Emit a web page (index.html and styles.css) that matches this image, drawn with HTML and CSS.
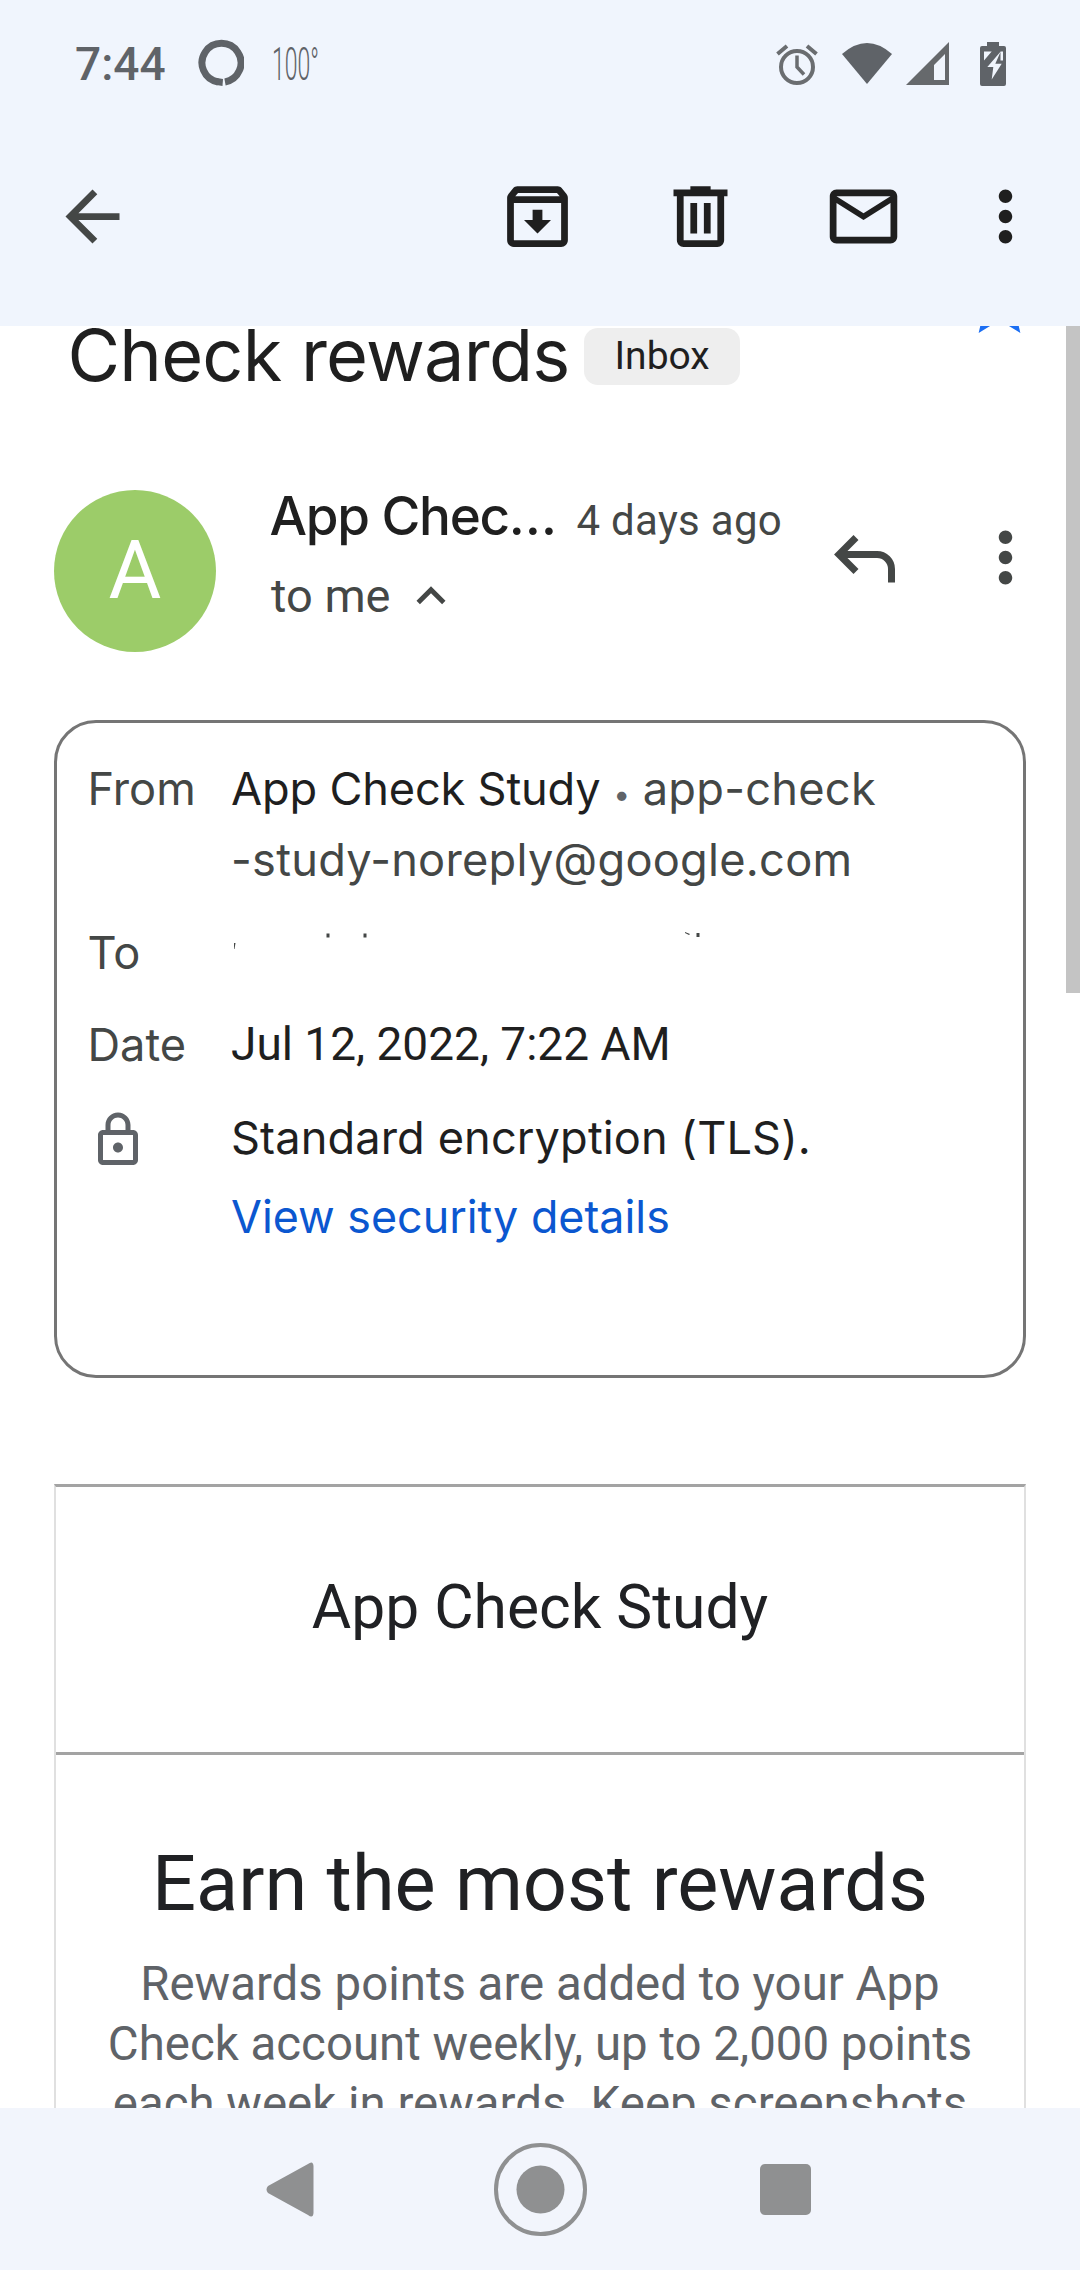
FILE: index.html
```html
<!DOCTYPE html>
<html lang="en">
<head>
<meta charset="utf-8">
<title>Check rewards</title>
<link rel="stylesheet" href="styles.css">
</head>
<body>
<div class="app">
  <header class="top">
    <div class="status">
      <span class="time">7:44</span>
      <svg class="ring" width="46" height="47" viewBox="0 0 46 47"><path d="M20 43A19.500 19.500 0 1 1 27 43" fill="none" stroke="#5f6368" stroke-width="7"/><path d="M19 39l6 1-.5 7-6-1z" fill="#5f6368"/></svg>
      <span class="temp">100°</span>
      <div class="status-right">
        <svg width="42" height="42" viewBox="0 0 42 42" class="s-alarm"><circle cx="21" cy="24" r="16" fill="none" stroke="#6a6d70" stroke-width="4"/><path d="M21 12.500V24l7 7.500" fill="none" stroke="#6a6d70" stroke-width="3.500"/><path d="M1.500 11L11 3M31 3l9.500 8" fill="none" stroke="#6a6d70" stroke-width="4"/></svg>
        <svg width="50" height="41" viewBox="0 0 50 41" class="s-wifi"><path d="M0 11Q25-11 50 11L25 41Z" fill="#5f6368"/></svg>
        <svg width="43" height="43" viewBox="0 0 43 43" class="s-signal"><path fill-rule="evenodd" d="M0 43L43 0V43ZM28 38H39V12L28 23Z" fill="#66696c"/></svg>
        <svg width="26" height="44" viewBox="0 0 26 44" class="s-batt"><path fill-rule="evenodd" d="M7 0H19V4H24Q26 4 26 6V42Q26 44 24 44H2Q0 44 0 42V6Q0 4 2 4H7ZM4 9.500V18.500L11.700 9.500ZM23 9.500H20.500V18.500H23ZM20.700 9.500L7.300 25H13.300L11.700 37.500L21.700 21.700H15.300Z" fill="#5f6368"/></svg>
      </div>
    </div>
    <div class="toolbar">
      <svg class="ic ic-back" viewBox="0 0 24 24"><path d="M20 11H7.830l5.590-5.590L12 4l-8 8 8 8 1.410-1.410L7.830 13H20v-2z"/></svg>
      <svg class="ic ic-archive" viewBox="0 0 24 24"><path d="M20.540 5.230l-1.390-1.680C18.880 3.210 18.470 3 18 3H6c-.47 0-.88.21-1.160.55L3.460 5.230C3.170 5.570 3 6.020 3 6.500V19c0 1.100.9 2 2 2h14c1.100 0 2-.9 2-2V6.500c0-.48-.17-.93-.46-1.270zM6.240 5h11.520l.83 1H5.420l.82-1zM5 19V8h14v11H5zm8.450-9h-2.900v3H8l4 4 4-4h-2.550z"/></svg>
      <svg class="ic" viewBox="0 0 24 24"><path d="M15 4V3H9v1H4v2h1v13c0 1.100.9 2 2 2h10c1.100 0 2-.9 2-2V6h1V4h-5zm2 15H7V6h10v13zM9 8h2v9H9zm4 0h2v9h-2z"/></svg>
      <svg class="ic" viewBox="0 0 24 24"><path d="M20 4H4c-1.100 0-1.990.9-1.990 2L2 18c0 1.100.9 2 2 2h16c1.100 0 2-.9 2-2V6c0-1.100-.9-2-2-2zm0 14H4V8l8 5 8-5v10zm-8-7L4 6h16l-8 5z"/></svg>
      <svg class="ic ic-more" viewBox="0 0 24 24"><path d="M12 8c1.100 0 2-.9 2-2s-.9-2-2-2-2 .9-2 2 .9 2 2 2zm0 2c-1.100 0-2 .9-2 2s.9 2 2 2 2-.9 2-2-.9-2-2-2zm0 6c-1.100 0-2 .9-2 2s.9 2 2 2 2-.9 2-2-.9-2-2-2z"/></svg>
    </div>
  </header>

  <main class="content">
    <div class="scrollbar"></div>
    <div class="subject">
      <h1 class="subject-title">Check rewards</h1>
      <span class="chip">Inbox</span>
      <svg class="star" viewBox="0 0 24 24"><path d="M12 17.270L18.180 21l-1.640-7.030L22 9.240l-7.190-.61L12 2 9.190 8.630 2 9.240l5.460 4.730L5.820 21z"/></svg>
    </div>

    <div class="sender">
      <div class="avatar">A</div>
      <div class="meta">
        <div class="meta-top">
          <span class="name">App Chec…</span>
          <span class="when">4 days ago</span>
        </div>
        <div class="meta-sub">
          <span>to me</span>
          <svg class="chev" viewBox="0 0 24 24"><path d="M12 8l-6 6 1.410 1.410L12 10.830l4.590 4.580L18 14z"/></svg>
        </div>
      </div>
      <svg class="reply" viewBox="0 0 81 81"><path d="M32 20.500L15 37.500l17 17M15 37.500H53a14.500 14.500 0 0 1 14.500 14.500V65.500" fill="none" stroke="#444746" stroke-width="7"/></svg>
      <svg class="ic ic-more2" viewBox="0 0 24 24"><path d="M12 8c1.100 0 2-.9 2-2s-.9-2-2-2-2 .9-2 2 .9 2 2 2zm0 2c-1.100 0-2 .9-2 2s.9 2 2 2 2-.9 2-2-.9-2-2-2zm0 6c-1.100 0-2 .9-2 2s.9 2 2 2 2-.9 2-2-.9-2-2-2z"/></svg>
    </div>

    <section class="details">
      <div class="label">From</div>
      <div class="value value-from"><span class="from-name">App Check Study</span> <span class="dot">•</span> <span class="addr">app-check<br>-study-noreply@google.com</span></div>
      <div class="label">To</div>
      <div class="value"><svg class="specks" width="480" height="71" viewBox="0 0 480 71"><path d="M95.500 16.500h3v4h-3zM132.500 16.500h3v4h-3zM465.500 16h3v4h-3zM454 15l5 2-1 1-4-2zM3 26h1.500l-1 6H3z" fill="#444746"/></svg></div>
      <div class="label">Date</div>
      <div class="value value-date">Jul 12, 2022, 7:22 AM</div>
      <svg class="lock" viewBox="0 0 24 24"><path d="M18 8h-1V6c0-2.760-2.240-5-5-5S7 3.240 7 6v2H6c-1.100 0-2 .9-2 2v10c0 1.100.9 2 2 2h12c1.100 0 2-.9 2-2V10c0-1.100-.9-2-2-2zM9 6c0-1.660 1.340-3 3-3s3 1.340 3 3v2H9V6zm9 14H6V10h12v10zm-6-3c1.100 0 2-.9 2-2s-.9-2-2-2-2 .9-2 2 .9 2 2 2z"/></svg>
      <div class="value value-tls">
        <div class="tls">Standard encryption (TLS).</div>
        <a class="link">View security details</a>
      </div>
    </section>

    <section class="mail">
      <div class="mail-brand">App Check Study</div>
      <div class="mail-body">
        <h2 class="mail-title">Earn the most rewards</h2>
        <p class="mail-text">Rewards points are added to your App<br>Check account weekly, up to 2,000 points<br>each week in rewards. Keep screenshots</p>
      </div>
    </section>
  </main>

  <nav class="nav">
    <svg width="48" height="55" viewBox="0 0 48 55"><path d="M2 31Q-1 27.500 2 24L42 2Q47-2 47.500 4V51Q47 57 42 53Z" fill="#8f9091"/></svg>
    <svg width="93" height="93" viewBox="0 0 93 93"><circle cx="46.500" cy="46.500" r="44.500" fill="none" stroke="#8f9091" stroke-width="4"/><circle cx="46.500" cy="46.500" r="24" fill="#8f9091"/></svg>
    <div class="nav-square"></div>
  </nav>
</div>
</body>
</html>
```
FILE: styles.css
```css
* { box-sizing: border-box; }
html, body { margin: 0; padding: 0; background: #fff; }
body { font-family: Roboto, "Liberation Sans", sans-serif; color: #1f1f1f; }
.app { width: 1080px; height: 2270px; display: flex; flex-direction: column; overflow: hidden; }

.top { height: 326px; flex: none; background: #f0f5fd; }
.status { height: 124px; display: flex; align-items: center; padding: 0 74px 0 75px; color: #5f6368; }
.time { font-size: 46px; font-weight: 500; width: 90px; line-height: 1; padding-top: 3px; }
.ring { margin-left: 33px; }
.temp { margin-left: 28px; font-size: 46px; font-weight: 300; line-height: 1; width: 48px; transform: scaleX(.5); transform-origin: left center; white-space: nowrap; padding-top: 3px; }
.status-right { margin-left: auto; display: flex; align-items: center; }
.s-alarm { margin-top: 4px; }
.s-wifi { margin-left: 24px; margin-top: 3px; }
.s-signal { margin-left: 14px; margin-top: 3px; }
.s-batt { margin-left: 31px; margin-top: 3px; }

.toolbar { display: flex; margin-top: 51.5px; padding: 0 34px 0 51.5px; }
.ic { width: 81px; height: 81px; flex: none; fill: #1f1f1f; }
.ic-back { fill: #444746; margin-right: auto; }
.ic-archive, .ic-archive + .ic, .ic-archive + .ic + .ic { margin-right: 82px; }
.ic-archive + .ic + .ic { margin-right: 61px; }

.content { flex: 1; min-height: 0; overflow: hidden; position: relative; }
.scrollbar { position: absolute; top: 0; right: 0; width: 14px; height: 667px; background: #c4c4c4; }

.subject { position: relative; height: 175.5px; margin-top: -11.5px; padding-left: 67.5px; display: flex; align-items: flex-start; }
.subject-title { margin: 0; font-family: Inter, Roboto, sans-serif; font-weight: 400; font-size: 72px; line-height: 80px; letter-spacing: -.77px; color: #1f1f1f; white-space: nowrap; }
.chip { margin: 13.5px 0 0 15px; height: 57px; line-height: 57px; padding: 0 30px; background: #eeeeee; border-radius: 14px; font-size: 39px; color: #1f1f1f; }
.star { position: absolute; left: 958.5px; top: -52.5px; width: 81px; height: 81px; fill: #1b6ef3; }

.sender { display: flex; align-items: flex-start; padding-left: 54px; height: 230px; }
.avatar { width: 162px; height: 162px; flex: none; border-radius: 50%; background: #9ccc69; color: #fff; font-size: 81px; line-height: 162px; text-align: center; }
.meta { margin-left: 53.5px; width: 512.5px; flex: none; }
.meta-top { display: flex; align-items: baseline; height: 52px; }
.name { width: 288px; flex: none; font-family: Inter, Roboto, sans-serif; font-weight: 500; font-size: 53px; line-height: 52px; letter-spacing: -1.3px; white-space: nowrap; color: #1f1f1f; }
.when { margin-left: 19px; font-size: 42px; letter-spacing: .3px; color: #444746; white-space: nowrap; }
.meta-sub { margin-top: 25px; height: 58px; display: flex; align-items: center; padding-left: 1.5px; font-size: 47px; line-height: 58px; color: #444746; }
.chev { width: 58px; height: 58px; margin-left: 11px; fill: #444746; }
.reply { width: 81px; height: 81px; flex: none; margin: 26.5px 0 0 42px; }
.ic-more2 { margin: 26.5px 0 0 60px; fill: #444746; }

.details { width: 972px; margin-left: 54px; border: 3px solid #757575; border-radius: 42px; padding: 30px 30px 122px 30.5px; display: grid; grid-template-columns: 143.5px 1fr; row-gap: 20.5px; font-family: Inter, Roboto, sans-serif; font-size: 45.2px; line-height: 71px; }
.label { color: #444746; }
.value { color: #1f1f1f; min-height: 71px; }
.value-from { margin-bottom: 1.5px; }
.from-name { letter-spacing: -.2px; }
.value-date { font-family: Roboto, sans-serif; font-size: 46px; }
.dot { color: #5f6368; font-size: 30px; line-height: 1; }
.addr { color: #444746; letter-spacing: .25px; }
.specks { display: block; }
.lock { width: 60px; height: 60px; margin: 9.5px 0 0 .5px; fill: #5f6368; }
.value-tls { margin-top: 1.5px; }
.tls { letter-spacing: .1px; }
.link { display: block; margin-top: 9.5px; font-size: 44.8px; color: #0b57d0; }

.mail { width: 972px; margin: 106px 0 0 54px; border: 2px solid #e0e0e0; border-top: 3px solid #a3a3a3; border-bottom: none; color: #202124; }
.mail-brand { height: 268px; padding-top: 81px; border-bottom: 3px solid #a3a3a3; font-size: 60.5px; line-height: 80px; text-align: center; }
.mail-body { padding-top: 84px; text-align: center; }
.mail-title { margin: 0; font-weight: 400; font-size: 77.5px; line-height: 90px; }
.mail-text { margin: 25px 0 0; font-size: 47.4px; line-height: 60px; color: #5f6368; white-space: nowrap; }

.nav { height: 162px; flex: none; background: #f2f5fc; display: flex; align-items: center; padding-left: 265.5px; position: relative; }
.nav svg + svg { margin-left: 180px; }
.nav-square { width: 51px; height: 51px; margin-left: 173px; background: #8f9091; border-radius: 5px; }
```
